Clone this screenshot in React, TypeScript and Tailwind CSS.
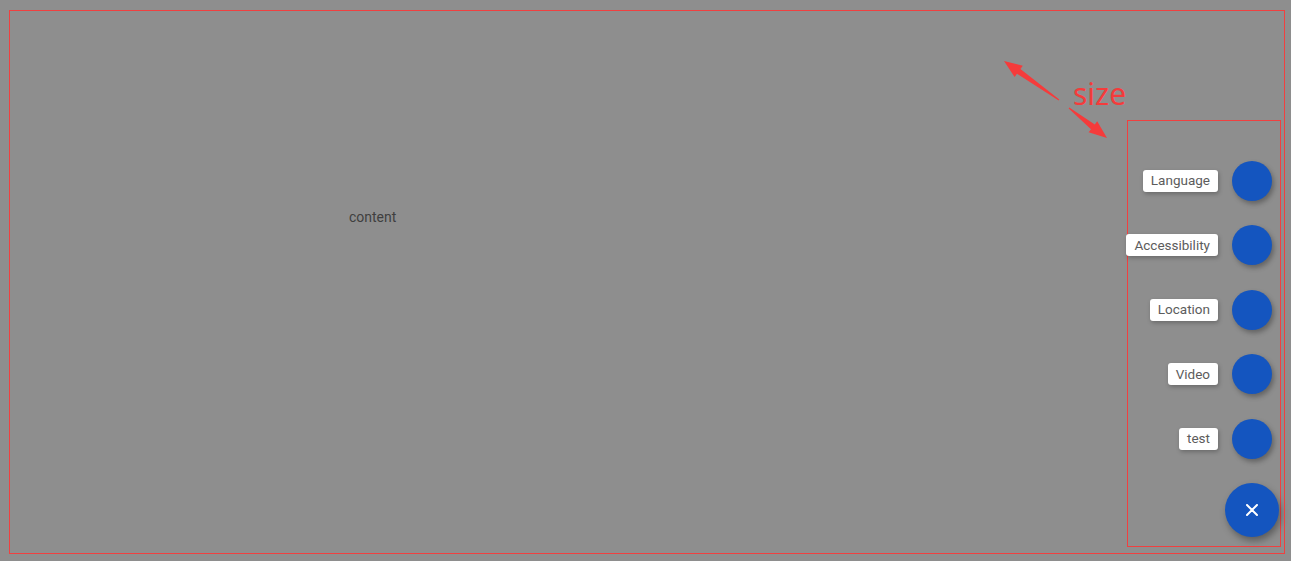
import * as React from "react";

const actions = ["Language", "Accessibility", "Location", "Video", "test"];

const Annotations: React.FC = () => (
    <>
        <svg
            className="pointer-events-none absolute inset-0"
            width="1291"
            height="561"
            viewBox="0 0 1291 561"
        >
            <rect x="9.5" y="10.5" width="1275" height="543" fill="none" stroke="#f04040" strokeWidth="1" />
            <polygon
                fill="#f53b3b"
                points="1059.3,99.6 1020.4,69 1022.8,65.7 1004,61 1014.6,77.1 1017,73.8 1058.7,100.4"
            />
            <polygon
                fill="#f53b3b"
                points="1068.7,108.4 1091,129.2 1088.6,132.3 1107,138 1097.2,121.3 1094.8,124.4 1069.3,107.6"
            />
        </svg>
        <div className="pointer-events-none absolute left-[1073px] top-[79px] font-['Noto_Sans',sans-serif] text-[30px] leading-none text-[#f53b3b]">
            size
        </div>
    </>
);

export default function App() {
    return (
        <div className="relative h-[561px] w-full overflow-hidden bg-[#8e8e8e] font-['Roboto',sans-serif]">
            <div className="pl-[349px] pt-[207px] text-[14px] text-[#3f3f3f]">content</div>

            <div className="absolute bottom-[14px] right-[10px] flex h-[427px] w-[154px] flex-col items-end justify-end gap-[24.5px] border border-[#f04040] pb-[9px] pr-px">
                {actions.map((label) => (
                    <div key={label} className="flex items-center">
                        <span className="mr-[7px] flex h-[22px] items-center rounded-[3px] bg-white px-[8px] text-[13.5px] text-[#5c5c5c] shadow-[1px_2px_4px_rgba(0,0,0,0.25)]">
                            {label}
                        </span>
                        <div className="flex w-[54px] justify-center">
                            <div className="h-10 w-10 rounded-full bg-[#1455bf] shadow-[2px_3px_5px_rgba(0,0,0,0.3)]" />
                        </div>
                    </div>
                ))}
                <button className="flex h-[54px] w-[54px] items-center justify-center rounded-full bg-[#1455bf] shadow-[2px_4px_7px_rgba(0,0,0,0.35)]">
                    <svg width="12" height="12" viewBox="0 0 12 12">
                        <path d="M1 1L11 11M11 1L1 11" stroke="#fff" strokeWidth="2" strokeLinecap="round" />
                    </svg>
                </button>
            </div>

            <Annotations />
        </div>
    );
}
